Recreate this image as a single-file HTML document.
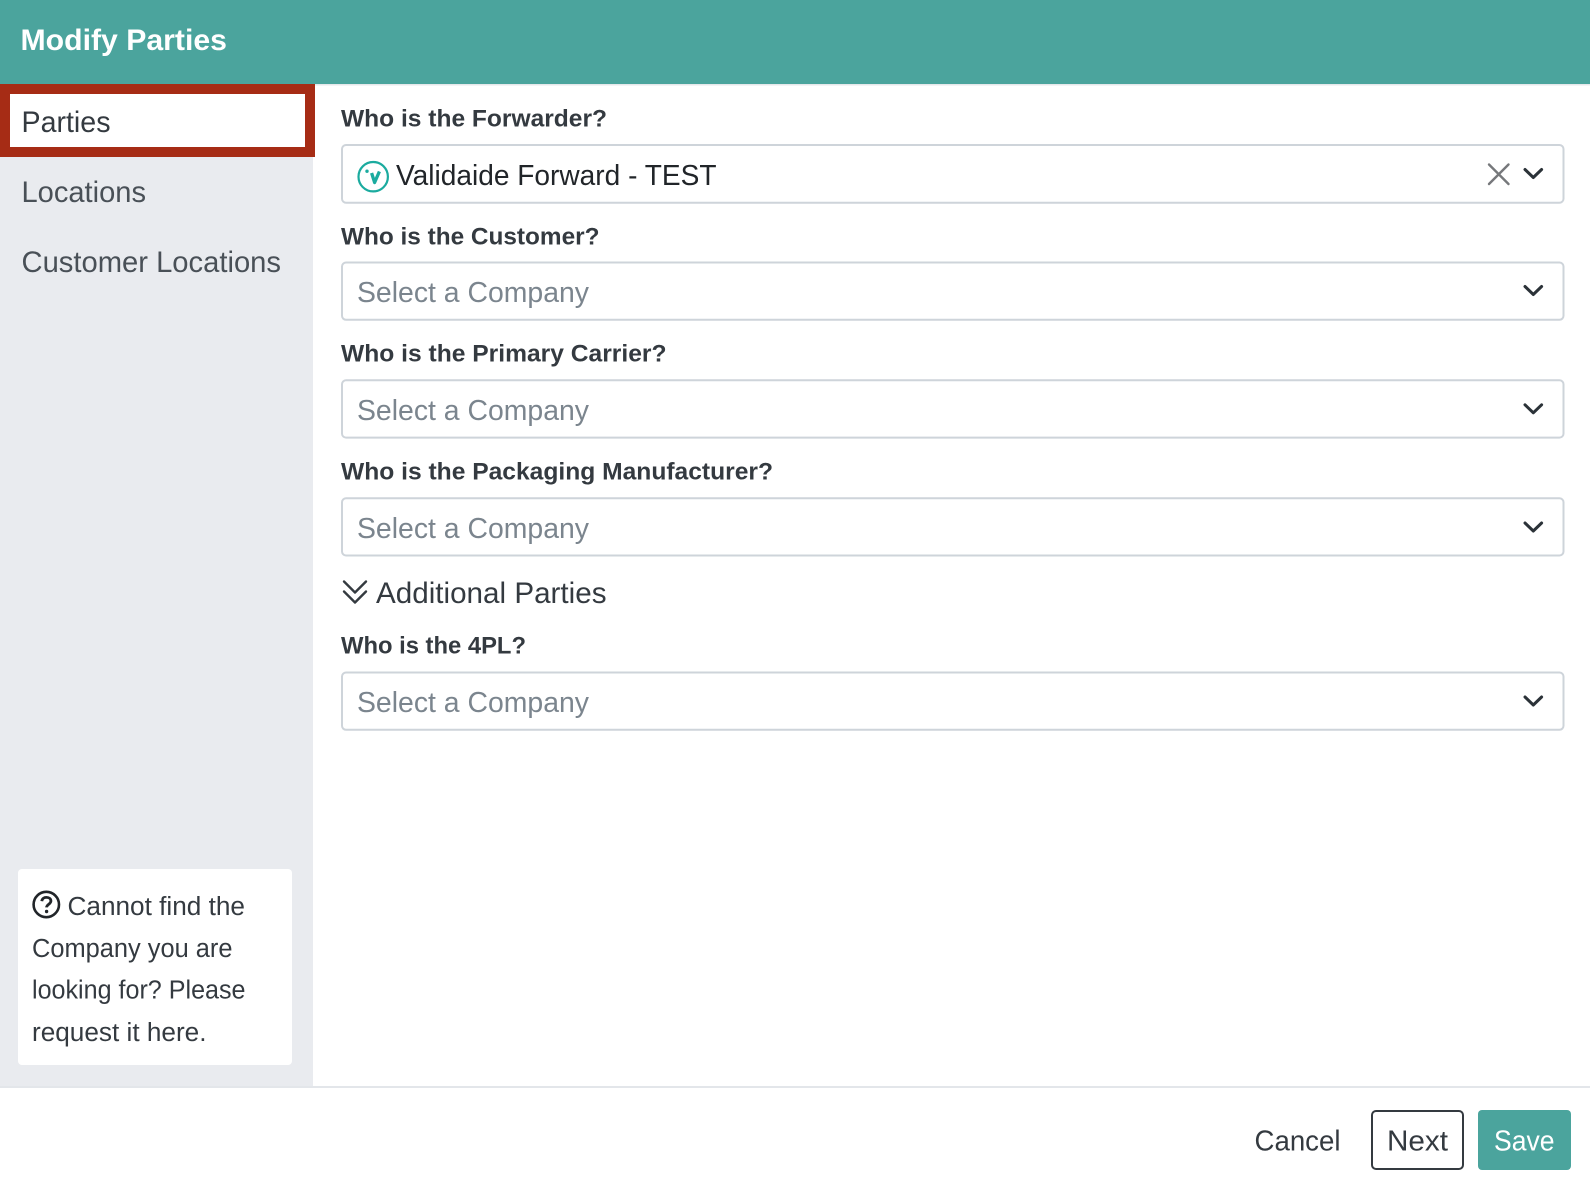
<!DOCTYPE html>
<html lang="en">
<head>
<meta charset="utf-8">
<title>Modify Parties</title>
<style>
html,body{margin:0;padding:0;background:#fff}
svg{display:block}
text{font-family:"Liberation Sans",Arial,sans-serif;white-space:pre}
.t{font-size:29.5px}
.l{font-size:24.5px;font-weight:700;fill:#343a40}
.s{font-size:29px;fill:#7b858e}
.h{font-size:25.5px;fill:#343a40}
.b{font-size:29px}
.box{fill:#fff;stroke:#ced4da;stroke-width:2}
.c{fill:none;stroke:#2b3238;stroke-width:3;stroke-linecap:round;stroke-linejoin:round}
</style>
</head>
<body>
<svg xmlns="http://www.w3.org/2000/svg" width="1590" height="1190" viewBox="0 0 1590 1190">
<rect width="1590" height="1190" fill="#fff"/>
<rect x="0" y="0" width="1590" height="84" fill="#4ba49d"/>
<rect x="0" y="84" width="1590" height="1.5" fill="#e6e8eb"/>
<text x="20.500" y="50" font-size="30" font-weight="700" fill="#fff" textLength="206.500" lengthAdjust="spacingAndGlyphs">Modify Parties</text>

<rect x="0" y="84" width="313" height="1002" fill="#e9ebef"/>
<rect x="0" y="84" width="315" height="73" fill="#a62c15"/>
<rect x="10" y="94" width="295" height="53" fill="#fff"/>
<text class="t" x="21.500" y="132" fill="#343a40" textLength="89" lengthAdjust="spacingAndGlyphs">Parties</text>
<text class="t" x="21.500" y="202" fill="#495057" textLength="124.500" lengthAdjust="spacingAndGlyphs">Locations</text>
<text class="t" x="21.500" y="272" fill="#495057" textLength="259.500" lengthAdjust="spacingAndGlyphs">Customer Locations</text>

<rect x="18" y="869" width="274" height="196" rx="4" fill="#fff"/>
<circle cx="46.300" cy="904.500" r="12.700" fill="none" stroke="#212529" stroke-width="2.600"/>
<path d="M41.800 901.200c.3-2.600 2.200-3.800 4.600-3.800 2.600 0 4.500 1.400 4.500 3.600 0 3.200-4.300 3.200-4.300 6.400" fill="none" stroke="#212529" stroke-width="2.800" stroke-linecap="butt"/>
<circle cx="46.600" cy="911.500" r="1.700" fill="#212529"/>
<text class="h" x="67.500" y="915" textLength="177.500" lengthAdjust="spacingAndGlyphs">Cannot find the</text>
<text class="h" x="32" y="957" textLength="200.500" lengthAdjust="spacingAndGlyphs">Company you are</text>
<text class="h" x="32" y="998.700" textLength="213.500" lengthAdjust="spacingAndGlyphs">looking for? Please</text>
<text class="h" x="32" y="1041" textLength="174.500" lengthAdjust="spacingAndGlyphs">request it here.</text>

<text class="l" x="341" y="126.700" textLength="266" lengthAdjust="spacingAndGlyphs">Who is the Forwarder?</text>
<rect class="box" x="342" y="145" width="1221.500" height="57.700" rx="4"/>
<circle cx="373.200" cy="176.700" r="14.700" fill="none" stroke="#1bab9f" stroke-width="2.200"/>
<path d="M371.600 173l3 9.500 4.800-11" fill="none" stroke="#1bab9f" stroke-width="3.300" stroke-linejoin="round"/>
<circle cx="367" cy="171.200" r="1.700" fill="#1bab9f"/>
<text class="b" x="396" y="185" fill="#212529" textLength="320.500" lengthAdjust="spacingAndGlyphs">Validaide Forward - TEST</text>
<path d="M1489 164.500l19.500 19.500M1508.500 164.500L1489 184" fill="none" stroke="#76787b" stroke-width="2.400" stroke-linecap="round"/>
<path class="c" d="M1525 169.500l8.300 8 8.300-8"/>

<text class="l" x="341" y="244.500" textLength="258.500" lengthAdjust="spacingAndGlyphs">Who is the Customer?</text>
<rect class="box" x="342" y="262.500" width="1221.500" height="57.300" rx="4"/>
<text class="s" x="357" y="302" textLength="232" lengthAdjust="spacingAndGlyphs">Select a Company</text>
<path class="c" d="M1525 286.500l8.300 8 8.300-8"/>

<text class="l" x="341" y="361.300" textLength="325.500" lengthAdjust="spacingAndGlyphs">Who is the Primary Carrier?</text>
<rect class="box" x="342" y="380.300" width="1221.500" height="57.300" rx="4"/>
<text class="s" x="357" y="420" textLength="232" lengthAdjust="spacingAndGlyphs">Select a Company</text>
<path class="c" d="M1525 404.800l8.300 8 8.300-8"/>

<text class="l" x="341" y="479.300" textLength="432" lengthAdjust="spacingAndGlyphs">Who is the Packaging Manufacturer?</text>
<rect class="box" x="342" y="498.300" width="1221.500" height="57.200" rx="4"/>
<text class="s" x="357" y="538" textLength="232" lengthAdjust="spacingAndGlyphs">Select a Company</text>
<path class="c" d="M1525 523l8.300 8 8.300-8"/>

<path d="M344 581.500l11 11 11-11M344 591.500l11 11 11-11" fill="none" stroke="#343a40" stroke-width="2.400" stroke-linecap="round" stroke-linejoin="round"/>
<text class="t" x="376" y="603" fill="#343a40" textLength="230.500" lengthAdjust="spacingAndGlyphs">Additional Parties</text>

<text class="l" x="341" y="653.300" textLength="185" lengthAdjust="spacingAndGlyphs">Who is the 4PL?</text>
<rect class="box" x="342" y="672.500" width="1221.500" height="57.300" rx="4"/>
<text class="s" x="357" y="712" textLength="232" lengthAdjust="spacingAndGlyphs">Select a Company</text>
<path class="c" d="M1525 697l8.300 8 8.300-8"/>

<rect x="0" y="1086" width="1590" height="2" fill="#e3e6ea"/>
<text class="b" x="1254.500" y="1150.700" fill="#343a40" textLength="86" lengthAdjust="spacingAndGlyphs">Cancel</text>
<rect x="1372" y="1111" width="91" height="58" rx="4" fill="#fff" stroke="#343a40" stroke-width="2"/>
<text class="b" x="1387" y="1150.700" fill="#343a40" textLength="61" lengthAdjust="spacingAndGlyphs">Next</text>
<rect x="1478" y="1110" width="93" height="60" rx="4" fill="#4ba49d"/>
<text class="b" x="1494" y="1150.700" fill="#fff" textLength="60.500" lengthAdjust="spacingAndGlyphs">Save</text>
</svg>
</body>
</html>
